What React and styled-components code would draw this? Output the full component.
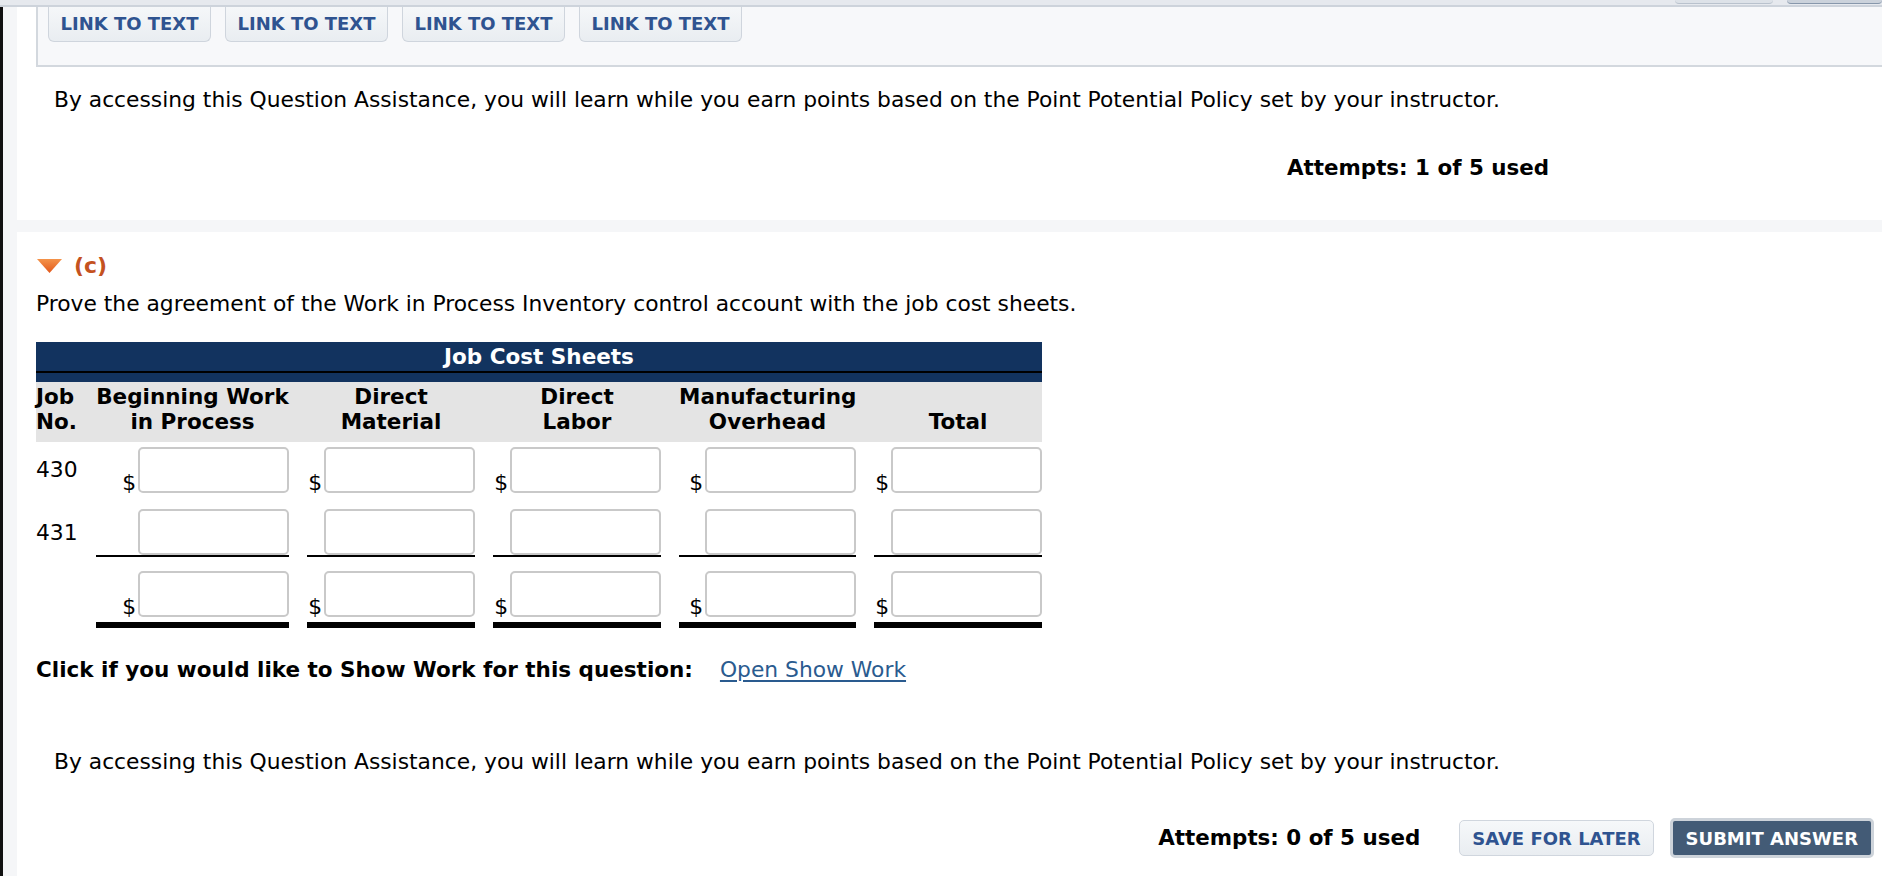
import React from "react";
import styled, { createGlobalStyle } from "styled-components";

const GlobalStyle = createGlobalStyle`
  html, body { margin: 0; padding: 0; }
  body {
    background: #f5f6f8;
    font-family: Verdana, "DejaVu Sans", sans-serif;
    color: #000;
    width: 1882px;
    overflow: hidden;
  }
`;

const Page = styled.div`
  width: 1882px;
  min-height: 876px;
  display: flex;
  flex-direction: column;
`;

const TopBand = styled.div`
  height: 5px;
  background: #e6e9ee;
  border-bottom: 2px solid #cdd3db;
  display: flex;
  justify-content: flex-end;
  gap: 14px;
`;

const BandPiece = styled.div`
  width: ${(p) => p.$w}px;
  height: 3px;
  background: ${(p) => (p.$dark ? "#cbd2db" : "#dde2e8")};
  border-bottom: 1px solid ${(p) => (p.$dark ? "#8797ab" : "#b9c2cd")};
  border-radius: 0 0 5px 5px;
`;

const Main = styled.div`
  flex: 1;
  border-left: 3px solid #111;
  padding-left: 14px;
  display: flex;
  flex-direction: column;
`;

const Card = styled.section`
  background: #fff;
  margin-top: ${(p) => p.$mt || 0}px;
  padding: ${(p) => p.$pad};
  display: flex;
  flex-direction: column;
  flex: ${(p) => (p.$grow ? 1 : "none")};
`;

const LinkBox = styled.div`
  margin-left: 19px;
  height: 60px;
  box-sizing: border-box;
  background: #f7f8fa;
  border-left: 2px solid #d3d8de;
  border-bottom: 2px solid #d3d8de;
  display: flex;
  align-items: flex-start;
  gap: 14px;
  padding-left: 10px;
`;

const LinkButton = styled.button`
  width: 163px;
  height: 35px;
  box-sizing: border-box;
  background: linear-gradient(#f5f7f9, #e9edf1);
  border: 1px solid #cfd5dd;
  border-top: none;
  border-radius: 0 0 6px 6px;
  color: #2f5390;
  font-family: Verdana, "DejaVu Sans", sans-serif;
  font-weight: bold;
  font-size: 18px;
  padding: 0 0 2px;
  cursor: pointer;
`;

const Assist = styled.p`
  margin: ${(p) => p.$mt}px 0 0;
  padding-left: ${(p) => p.$indent}px;
  font-size: 21.8px;
  line-height: 26px;
`;

const Attempts = styled.div`
  font-size: 21.4px;
  line-height: 26px;
  font-weight: bold;
  white-space: nowrap;
`;

const AttemptsLine = styled.div`
  margin-top: ${(p) => p.$mt}px;
  padding-right: ${(p) => p.$pr}px;
  display: flex;
  justify-content: flex-end;
  align-items: center;
`;

const PartHead = styled.div`
  display: flex;
  align-items: center;
  gap: 12px;
  padding-left: 1px;
  font-size: 22px;
  line-height: 26px;
  font-weight: bold;
  color: #c4521f;
`;

const Prompt = styled.p`
  margin: 12px 0 0;
  font-size: 21.8px;
  line-height: 26px;
`;

const Sheet = styled.div`
  margin-top: 25px;
  width: 1006px;
`;

const TitleBar = styled.div`
  background: #12335f;
  color: #fff;
  height: 29px;
  line-height: 29px;
  text-align: center;
  font-weight: bold;
  font-size: 21.5px;
  border-bottom: 2px solid #000;
`;

const SubStrip = styled.div`
  height: 9px;
  background: #12335f;
`;

const cols = "42px 193px 168px 168px 177px 168px";

const HeadRow = styled.div`
  display: grid;
  grid-template-columns: ${cols};
  column-gap: 18px;
  background: #e4e4e4;
  height: 60px;
  box-sizing: border-box;
  padding-bottom: 8px;
  align-items: end;
`;

const HeadCell = styled.div`
  font-weight: bold;
  font-size: 21.5px;
  line-height: 25px;
  text-align: ${(p) => (p.$left ? "left" : "center")};
  white-space: nowrap;
`;

const BodyRow = styled.div`
  display: grid;
  grid-template-columns: ${cols};
  column-gap: 18px;
  padding-top: ${(p) => p.$pt}px;
`;

const JobCell = styled.div`
  align-self: center;
  font-size: 21.8px;
  line-height: 26px;
  white-space: nowrap;
`;

const AmountCell = styled.div`
  display: flex;
  justify-content: flex-end;
  align-items: flex-end;
  gap: 2px;
  padding-bottom: ${(p) => (p.$rule === "double" ? 5 : 0)}px;
  border-bottom: ${(p) =>
    p.$rule === "double" ? "6px solid #000" : p.$rule === "single" ? "2px solid #000" : "none"};
`;

const Dollar = styled.span`
  font-size: 21.8px;
  line-height: 21px;
`;

const AmountInput = styled.input`
  width: 151px;
  height: 46px;
  box-sizing: border-box;
  border: 2px solid #c9c9c9;
  border-radius: 5px;
  background: #fff;
  margin: 0;
  padding: 0 6px;
  font-size: 18px;
  font-family: Verdana, "DejaVu Sans", sans-serif;
`;

const ShowWorkLine = styled.div`
  margin-top: 29px;
  display: flex;
  align-items: center;
  gap: 27px;
  font-size: 21.5px;
  line-height: 26px;
`;

const ShowWorkLabel = styled.span`
  font-weight: bold;
`;

const ShowWorkLink = styled.a`
  color: #2a5b8f;
  font-size: 21.8px;
  text-decoration: underline;
  text-underline-offset: 3px;
  cursor: pointer;
`;

const ActionButton = styled.button`
  height: ${(p) => (p.$primary ? 40 : 36)}px;
  box-sizing: border-box;
  padding: 0 ${(p) => (p.$primary ? 13 : 12)}px;
  margin-left: ${(p) => p.$ml}px;
  border-radius: 5px;
  font-family: Verdana, "DejaVu Sans", sans-serif;
  font-weight: bold;
  font-size: 18px;
  cursor: pointer;
  background: ${(p) => (p.$primary ? "#435b76" : "linear-gradient(#f6f8fa, #e9edf1)")};
  color: ${(p) => (p.$primary ? "#fff" : "#2f5390")};
  border: ${(p) => (p.$primary ? "3px solid #cdd3da" : "1px solid #d0d6de")};
`;

const Caret = () => (
  <svg width="25" height="14" viewBox="0 0 25 14">
    <defs>
      <linearGradient id="cg" x1="0" y1="0" x2="0" y2="1">
        <stop offset="0" stopColor="#f4934a" />
        <stop offset="1" stopColor="#e2581b" />
      </linearGradient>
    </defs>
    <polygon points="0,0 25,0 12.5,14" fill="url(#cg)" />
  </svg>
);

const assistText =
  "By accessing this Question Assistance, you will learn while you earn points based on the Point Potential Policy set by your instructor.";

const headers = [
  { l1: "Job", l2: "No.", left: true },
  { l1: "Beginning Work", l2: "in Process" },
  { l1: "Direct", l2: "Material" },
  { l1: "Direct", l2: "Labor" },
  { l1: "Manufacturing", l2: "Overhead" },
  { l1: "", l2: "Total" },
];

const rows = [
  { job: "430", dollar: true, rule: "none", pt: 5 },
  { job: "431", dollar: false, rule: "single", pt: 16 },
  { job: "", dollar: true, rule: "double", pt: 14 },
];

export default function App() {
  return (
    <Page>
      <GlobalStyle />
      <TopBand>
        <BandPiece $w={98} />
        <BandPiece $w={95} $dark />
      </TopBand>
      <Main>
        <Card $pad="0 0 39px 0">
          <LinkBox>
            {[0, 1, 2, 3].map((i) => (
              <LinkButton key={i}>LINK TO TEXT</LinkButton>
            ))}
          </LinkBox>
          <Assist $mt={20} $indent={37}>
            {assistText}
          </Assist>
          <AttemptsLine $mt={42} $pr={333}>
            <Attempts>Attempts: 1 of 5 used</Attempts>
          </AttemptsLine>
        </Card>

        <Card $mt={12} $pad="21px 0 18px 19px" $grow>
          <PartHead>
            <Caret />
            <span>(c)</span>
          </PartHead>
          <Prompt>
            Prove the agreement of the Work in Process Inventory control account with the job cost sheets.
          </Prompt>
          <Sheet>
            <TitleBar>Job Cost Sheets</TitleBar>
            <SubStrip />
            <HeadRow>
              {headers.map((h, i) => (
                <HeadCell key={i} $left={h.left}>
                  {h.l1 && (
                    <>
                      {h.l1}
                      <br />
                    </>
                  )}
                  {h.l2}
                </HeadCell>
              ))}
            </HeadRow>
            {rows.map((r, ri) => (
              <BodyRow key={ri} $pt={r.pt}>
                <JobCell>{r.job}</JobCell>
                {[0, 1, 2, 3, 4].map((c) => (
                  <AmountCell key={c} $rule={r.rule}>
                    {r.dollar && <Dollar>$</Dollar>}
                    <AmountInput type="text" />
                  </AmountCell>
                ))}
              </BodyRow>
            ))}
          </Sheet>
          <ShowWorkLine>
            <ShowWorkLabel>Click if you would like to Show Work for this question:</ShowWorkLabel>
            <ShowWorkLink>Open Show Work</ShowWorkLink>
          </ShowWorkLine>
          <Assist $mt={66} $indent={18}>
            {assistText}
          </Assist>
          <AttemptsLine $mt={43} $pr={8}>
            <Attempts>Attempts: 0 of 5 used</Attempts>
            <ActionButton $ml={39}>SAVE FOR LATER</ActionButton>
            <ActionButton $ml={16} $primary>
              SUBMIT ANSWER
            </ActionButton>
          </AttemptsLine>
        </Card>
      </Main>
    </Page>
  );
}
